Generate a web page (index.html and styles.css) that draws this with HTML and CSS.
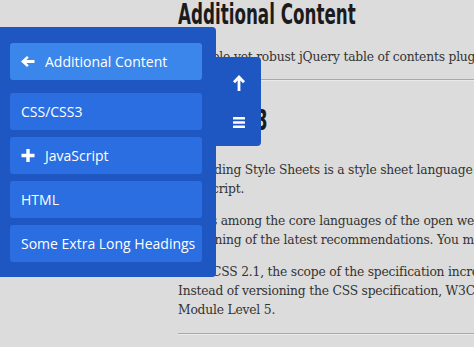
FILE: index.html
```html
<!DOCTYPE html>
<html>
<head>
<meta charset="utf-8">
<link rel="stylesheet" href="styles.css">
</head>
<body>
<div class="page">
  <main class="content">
    <h1 class="title"><span class="narrow">Additional Content</span></h1>
    <p class="lead">A simple yet robust jQuery table of contents plugin for creating a sticky, collapsible navigation.</p>
    <hr class="rule">
    <h2 class="title"><span class="narrow">CSS/CSS3</span></h2>
    <p>Cascading Style Sheets is a style sheet language used for describing the presentation of a document written in a markup language<br>JavaScript.</p>
    <p>CSS is among the core languages of the open web and is standardized across Web browsers according to W3C specifications.<br>versioning of the latest recommendations. You might have heard about CSS1, CSS2.1 and CSS3.</p>
    <p>After CSS 2.1, the scope of the specification increased significantly and the progress on different CSS modules started to differ.<br>Instead of versioning the CSS specification, W3C now periodically takes a snapshot of the latest stable state of the specification,<br>Module Level 5.</p>
    <hr class="rule">
  </main>

  <nav class="toc">
    <a class="toc-item toc-item--active"><svg class="ico" viewBox="0 0 14 12"><path d="M0 6 L6 0.5 L7.8 2.3 L5.3 4.6 H13.5 V7.4 H5.3 L7.8 9.7 L6 11.5 Z" fill="#fff"/></svg>Additional Content</a>
    <div class="toc-list">
      <a class="toc-item">CSS/CSS3</a>
      <a class="toc-item"><svg class="ico" viewBox="0 0 13 13"><path d="M4.8 0 H8.2 V4.8 H13 V8.2 H8.2 V13 H4.8 V8.2 H0 V4.8 H4.8 Z" fill="#fff"/></svg>JavaScript</a>
      <a class="toc-item">HTML</a>
      <a class="toc-item">Some Extra Long Headings</a>
    </div>
  </nav>
  <div class="toc-tab">
    <svg class="tab-ico" viewBox="0 0 12 16"><path d="M6 0 L12 6.3 L10 8.2 L7.4 5.5 V16 H4.6 V5.5 L2 8.2 L0 6.3 Z" fill="#fff"/></svg>
    <svg class="tab-ico" viewBox="0 0 12 11"><rect x="0" y="0" width="12" height="2.6" rx="0.6" fill="#fff"/><rect x="0" y="4.2" width="12" height="2.6" rx="0.6" fill="#fff"/><rect x="0" y="8.4" width="12" height="2.6" rx="0.6" fill="#fff"/></svg>
  </div>
</div>
</body>
</html>
```
FILE: styles.css
```css
html, body {
  margin: 0;
  padding: 0;
  background: #dcdcdc;
  overflow: hidden;
}
.page {
  position: relative;
  width: 474px;
  height: 347px;
  overflow: hidden;
}
.content {
  padding-left: 178px;
  width: 1100px;
  color: #333;
  font-family: "DejaVu Serif", serif;
  font-size: 12.3px;
  letter-spacing: -0.2px;
  line-height: 19px;
  white-space: nowrap;
}
.title {
  font-family: "DejaVu Sans Condensed", sans-serif;
  font-weight: 700;
  font-size: 28px;
  line-height: 32px;
  letter-spacing: 0;
  color: #1b1b1b;
  margin: 0;
}
.narrow {
  display: inline-block;
  transform: scaleX(0.665);
  transform-origin: left center;
}
h1.title { margin-top: -1px; }
h2.title { margin-top: 24px; margin-bottom: 24px; }
.content p { margin-top: 0; margin-bottom: 13px; }
.content p.lead { margin-top: 17px; margin-bottom: 12px; }
.rule {
  border: 0;
  border-top: 1px solid #a9a9a9;
  border-bottom: 1px solid #eaeaea;
  margin: 0;
}
.toc {
  position: absolute;
  left: 0;
  top: 27px;
  width: 192px;
  padding: 16px 14px 15px 10px;
  background: #1e56c2;
  border-radius: 0 4px 4px 0;
  display: flex;
  flex-direction: column;
  gap: 13px;
}
.toc-list {
  display: flex;
  flex-direction: column;
  gap: 7px;
}
.toc-item {
  display: flex;
  align-items: center;
  height: 37px;
  padding-left: 11px;
  background: #2a6ee2;
  border-radius: 3px;
  color: #fff;
  font-family: "Open Sans", "Noto Sans", sans-serif;
  font-size: 14px;
}
.toc-item--active { background: #3b86eb; }
.ico {
  width: 14px;
  height: 13px;
  margin-right: 10px;
}
.toc-tab {
  position: absolute;
  left: 216px;
  top: 57px;
  width: 45px;
  height: 89px;
  background: #1e56c2;
  border-radius: 0 4px 4px 0;
  display: flex;
  flex-direction: column;
  align-items: center;
  justify-content: center;
  gap: 26px;
}
.tab-ico { width: 12px; height: 16px; }
.tab-ico + .tab-ico { height: 11px; }
```
